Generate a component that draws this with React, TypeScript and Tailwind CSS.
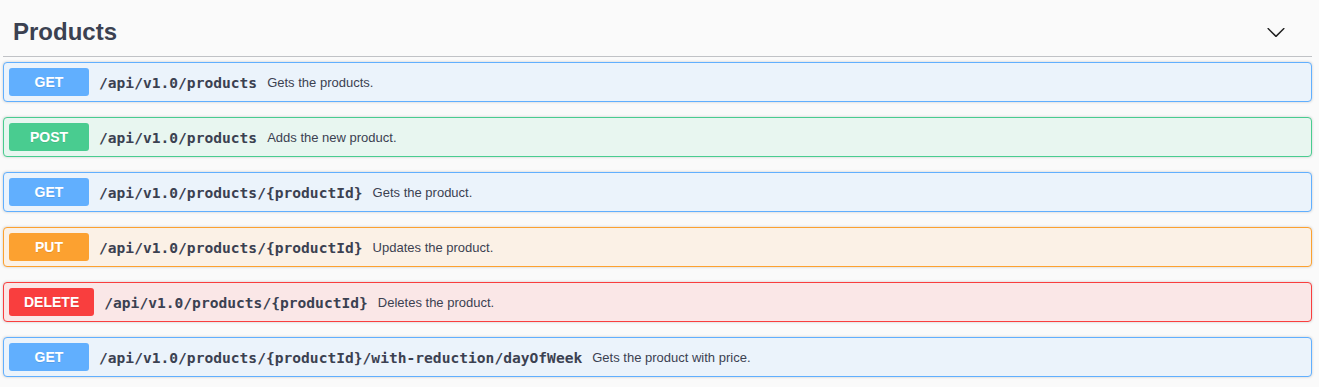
import React from 'react';

type Op = {
    method: 'GET' | 'POST' | 'PUT' | 'DELETE';
    path: string;
    summary: string;
};

const ops: Op[] = [
    { method: 'GET', path: '/api/v1.0/products', summary: 'Gets the products.' },
    { method: 'POST', path: '/api/v1.0/products', summary: 'Adds the new product.' },
    { method: 'GET', path: '/api/v1.0/products/{productId}', summary: 'Gets the product.' },
    { method: 'PUT', path: '/api/v1.0/products/{productId}', summary: 'Updates the product.' },
    { method: 'DELETE', path: '/api/v1.0/products/{productId}', summary: 'Deletes the product.' },
    { method: 'GET', path: '/api/v1.0/products/{productId}/with-reduction/dayOfWeek', summary: 'Gets the product with price.' },
];

const styles = {
    GET: { block: 'border-[#61affe] bg-[#ebf3fb]', badge: 'bg-[#61affe]' },
    POST: { block: 'border-[#49cc90] bg-[#e8f6f0]', badge: 'bg-[#49cc90]' },
    PUT: { block: 'border-[#fca130] bg-[#fbf1e6]', badge: 'bg-[#fca130]' },
    DELETE: { block: 'border-[#f93e3e] bg-[#fae7e7]', badge: 'bg-[#f93e3e]' },
};

const Operation: React.FC<{ op: Op }> = ({ op }) => {
    const s = styles[op.method];
    return (
        <div className={`mb-[15px] rounded-[4px] border shadow-[0_0_3px_rgba(0,0,0,0.19)] ${s.block}`}>
            <div className="flex items-center p-[5px]">
                <span
                    className={`min-w-[80px] rounded-[3px] px-[15px] pt-[6px] pb-[6px] text-center text-[14px] leading-[16px] font-bold text-white [text-shadow:0_1px_0_rgba(0,0,0,0.1)] ${s.badge}`}
                >
                    {op.method}
                </span>
                <span className="px-[10px] pt-[1px] text-[14.6px] font-bold text-[#3b4151] [font-family:'DejaVu_Sans_Mono',monospace]">
                    {op.path}
                </span>
                <span className="pt-[1px] text-[13px] text-[#3b4151]">{op.summary}</span>
            </div>
        </div>
    );
};

const App: React.FC = () => {
    return (
        <div className="min-h-screen bg-[#fafafa] [font-family:'Liberation_Sans',Arial,sans-serif]">
            <div className="ml-[3px] mr-[7px]">
                <h3 className="mb-[5px] flex items-center border-b border-[rgba(59,65,81,0.3)] pt-[18px] pb-[10px] pl-[10px] pr-[26px]">
                    <span className="flex-1 text-[24px] leading-[28px] font-bold text-[#3b4151]">Products</span>
                    <svg width="20" height="20" viewBox="0 0 20 20" className="fill-[#1f1f1f]">
                        <path d="M17.418 6.109c.272-.268.709-.268.979 0s.271.701 0 .969l-7.908 7.83c-.27.268-.707.268-.979 0l-7.908-7.83c-.27-.268-.27-.701 0-.969.271-.268.709-.268.979 0L10 13.25l7.418-7.141z" />
                    </svg>
                </h3>
                <div>
                    {ops.map((op, i) => (
                        <Operation key={i} op={op} />
                    ))}
                </div>
            </div>
        </div>
    );
};

export default App;
